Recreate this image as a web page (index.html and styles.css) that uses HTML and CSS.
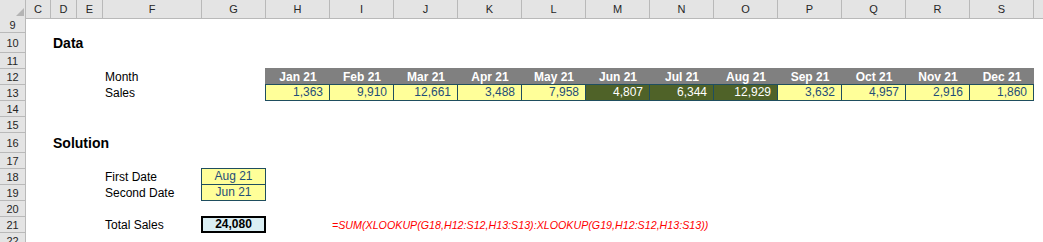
FILE: index.html
```html
<!DOCTYPE html>
<html>
<head>
<meta charset="utf-8">
<title>XLOOKUP range</title>
<link rel="stylesheet" href="styles.css">
</head>
<body>
<div class="sheet">
  <div class="colhead">
    <div class="corner"><svg class="tri" width="8" height="8" viewBox="0 0 8 8"><polygon points="8,0 8,8 0,8"/></svg></div>
    <div class="ch">C</div>
    <div class="ch">D</div>
    <div class="ch">E</div>
    <div class="ch">F</div>
    <div class="ch">G</div>
    <div class="ch">H</div>
    <div class="ch">I</div>
    <div class="ch">J</div>
    <div class="ch">K</div>
    <div class="ch">L</div>
    <div class="ch">M</div>
    <div class="ch">N</div>
    <div class="ch">O</div>
    <div class="ch">P</div>
    <div class="ch">Q</div>
    <div class="ch">R</div>
    <div class="ch">S</div>
    <div class="ch"></div>
  </div>

  <div class="row"><div class="rh">9</div></div>
  <div class="row tall"><div class="rh">10</div><div class="cell title colD">Data</div></div>
  <div class="row"><div class="rh">11</div></div>
  <div class="row">
    <div class="rh">12</div>
    <div class="cell colF">Month</div>
    <div class="months">
      <div class="m">Jan 21</div><div class="m">Feb 21</div><div class="m">Mar 21</div><div class="m">Apr 21</div>
      <div class="m">May 21</div><div class="m">Jun 21</div><div class="m">Jul 21</div><div class="m">Aug 21</div>
      <div class="m">Sep 21</div><div class="m">Oct 21</div><div class="m">Nov 21</div><div class="m">Dec 21</div>
    </div>
  </div>
  <div class="row">
    <div class="rh">13</div>
    <div class="cell colF">Sales</div>
    <div class="sales">
      <div class="v">1,363</div><div class="v">9,910</div><div class="v">12,661</div><div class="v">3,488</div>
      <div class="v">7,958</div><div class="v hi">4,807</div><div class="v hi">6,344</div><div class="v hi">12,929</div>
      <div class="v">3,632</div><div class="v">4,957</div><div class="v">2,916</div><div class="v">1,860</div>
    </div>
  </div>
  <div class="row"><div class="rh">14</div></div>
  <div class="row"><div class="rh">15</div></div>
  <div class="row tall"><div class="rh">16</div><div class="cell title colD">Solution</div></div>
  <div class="row"><div class="rh">17</div></div>
  <div class="row"><div class="rh">18</div><div class="cell colF">First Date</div><div class="inp colG">Aug 21</div></div>
  <div class="row"><div class="rh">19</div><div class="cell colF">Second Date</div><div class="inp colG">Jun 21</div></div>
  <div class="row"><div class="rh">20</div></div>
  <div class="row">
    <div class="rh">21</div>
    <div class="cell colF">Total Sales</div>
    <div class="total colG">24,080</div>
    <div class="cell formula colI">=SUM(XLOOKUP(G18,H12:S12,H13:S13):XLOOKUP(G19,H12:S12,H13:S13))</div>
  </div>
  <div class="row"><div class="rh">22</div></div>
</div>
</body>
</html>
```

FILE: styles.css
```css
* {
  box-sizing: border-box;
}

html,
body {
  margin: 0;
  padding: 0;
  background: #ffffff;
  overflow: hidden;
}

body {
  font-family: "Liberation Sans", Arial, sans-serif;
  font-size: 12px;
  color: #000000;
}

.sheet {
  display: flex;
  flex-direction: column;
  width: 1043px;
  height: 242px;
  overflow: hidden;
}

.colhead,
.row {
  display: grid;
  grid-template-columns: 26px 25px 26px 26px 99px repeat(14, 64px);
}

.colhead {
  height: 17px;
  flex: none;
}

.corner,
.ch {
  background: #e4e4e4;
  border-right: 1px solid #b9b9b9;
  border-bottom: 1px solid #b9b9b9;
}

.corner {
  display: flex;
  justify-content: flex-end;
  align-items: flex-end;
  padding: 0 1px 2px 0;
}

.tri {
  display: block;
  fill: #b4b4b4;
}

.ch {
  text-align: center;
  font-size: 11px;
  line-height: 18px;
  color: #262626;
}

.row {
  height: 16px;
  flex: none;
}

.row.tall {
  height: 20px;
}

.rh {
  grid-column: 1;
  background: #e4e4e4;
  border-right: 1px solid #b9b9b9;
  border-bottom: 1px solid #b9b9b9;
  display: flex;
  justify-content: center;
  align-items: center;
  font-size: 11px;
  line-height: 14px;
  color: #262626;
}

.cell {
  display: flex;
  align-items: flex-end;
  padding-left: 2px;
  white-space: nowrap;
  line-height: 16px;
}

.title {
  font-size: 14px;
  font-weight: bold;
  line-height: 20px;
}

.colD { grid-column: 3; }
.colF { grid-column: 5; }
.colG { grid-column: 6; }
.colI { grid-column: 8 / span 8; }

.months {
  grid-column: 7 / span 12;
  margin: -1px 0 0 -1px;
  padding-left: 1px;
  background: #808080;
  display: flex;
  align-items: flex-end;
}

.m {
  width: 64px;
  flex: none;
  text-align: center;
  color: #ffffff;
  font-weight: bold;
  line-height: 16px;
  white-space: nowrap;
}

.sales {
  grid-column: 7 / span 12;
  margin: -1px 0 0 -1px;
  display: flex;
  border-top: 1px solid #1f4e5f;
  border-left: 1px solid #1f4e5f;
}

.v {
  width: 64px;
  flex: none;
  background: #ffff99;
  border-right: 1px solid #1f4e5f;
  border-bottom: 1px solid #1f4e5f;
  text-align: right;
  padding-right: 6px;
  color: #1f4e78;
  line-height: 15px;
}

.v.hi {
  background: #4f6228;
  color: #ffffff;
}

.inp {
  margin: -1px 0 0 -1px;
  background: #ffff99;
  border: 1px solid #1f4e5f;
  text-align: center;
  color: #1f4e78;
  line-height: 15px;
}

.total {
  margin: -1px 0 0 -1px;
  background: #daeef3;
  border: 2px solid #000000;
  text-align: center;
  font-weight: bold;
  line-height: 13px;
}

.formula {
  color: #ff0000;
  font-style: italic;
  font-size: 10.7px;
  line-height: 16px;
}
```
